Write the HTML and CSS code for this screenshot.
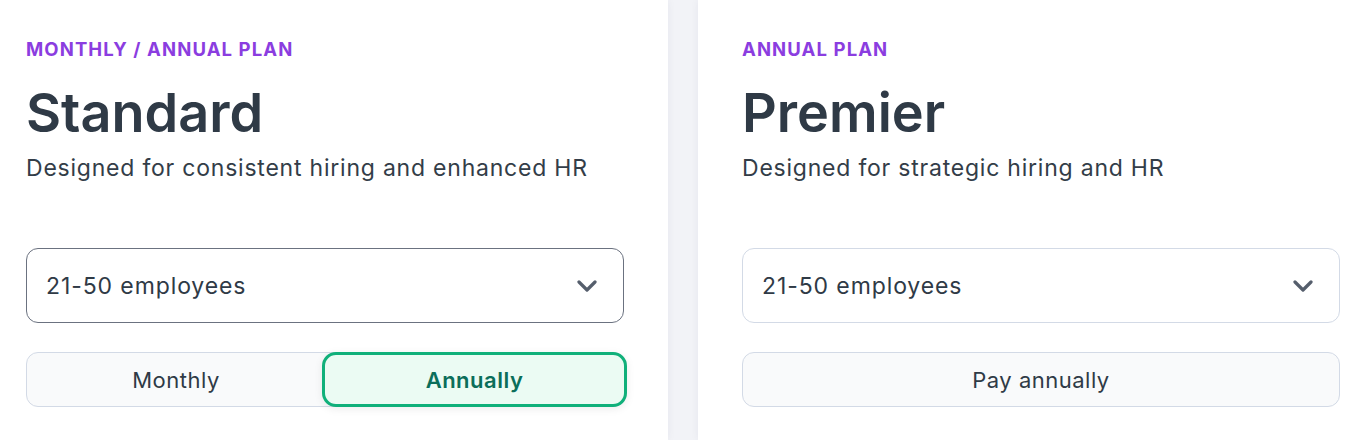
FILE: index.html
```html
<!DOCTYPE html>
<html lang="en">
<head>
    <meta charset="UTF-8">
    <meta name="viewport" content="width=device-width, initial-scale=1.0">
    <title>Plans</title>
    <link rel="stylesheet" href="styles.css">
</head>
<body>
    <div class="plans">
        <!-- Standard -->
        <div class="plan">
            <p class="plan-type">Monthly / Annual plan</p>
            <h2 class="plan-name">Standard</h2>
            <p class="plan-desc">Designed for consistent hiring and enhanced HR</p>

            <div class="select select-focus">
                <span>21-50 employees</span>
                <svg class="chevron" width="20" height="12" viewBox="0 0 20 12"><path d="M2 2l8 8 8-8" fill="none" stroke="currentColor" stroke-width="3.2" stroke-linecap="round" stroke-linejoin="round"/></svg>
            </div>

            <div class="toggle">
                <button class="toggle-btn">Monthly</button>
                <button class="toggle-btn active">Annually</button>
            </div>
        </div>

        <!-- Premier -->
        <div class="plan">
            <p class="plan-type">Annual plan</p>
            <h2 class="plan-name">Premier</h2>
            <p class="plan-desc">Designed for strategic hiring and HR</p>

            <div class="select">
                <span>21-50 employees</span>
                <svg class="chevron" width="20" height="12" viewBox="0 0 20 12"><path d="M2 2l8 8 8-8" fill="none" stroke="currentColor" stroke-width="3.2" stroke-linecap="round" stroke-linejoin="round"/></svg>
            </div>

            <div class="toggle single">
                <button class="toggle-btn">Pay annually</button>
            </div>
        </div>
    </div>
</body>
</html>
```

FILE: styles.css
```css
body {
    margin: 0;
    font-family: Inter, "Noto Sans", Arial, sans-serif;
    background-color: #f2f3f7;
    color: #2f3a46;
    overflow: hidden;
}
.plans {
    display: flex;
    gap: 30px;
    margin-left: -18px;
}
.plan {
    flex: 0 0 686px;
    box-sizing: border-box;
    height: 440px;
    background-color: #fff;
    padding: 38px 44px 0;
    box-shadow: 0 0 8px rgba(30, 40, 80, 0.06);
}
.plan-type {
    margin: 0;
    font-size: 18.5px;
    font-weight: 700;
    letter-spacing: 1.1px;
    text-transform: uppercase;
    color: #8b3de0;
    line-height: 22px;
}
.plan-name {
    margin: 21px 0 0;
    font-size: 54px;
    font-weight: 600;
    line-height: 64px;
    color: #2f3a46;
}
.plan-desc {
    margin: 8px 0 0;
    font-size: 23px;
    letter-spacing: 0.78px;
    line-height: 30px;
    color: #333d48;
}
.select {
    margin-top: 65px;
    height: 75px;
    box-sizing: border-box;
    border: 1px solid #d3dae6;
    border-radius: 12px;
    display: flex;
    align-items: center;
    justify-content: space-between;
    padding: 0 26px 0 19px;
    font-size: 23px;
    letter-spacing: 0.9px;
    color: #2f3a46;
}
.select-focus {
    border-color: #6b7280;
}
.chevron {
    color: #555e6c;
}
.toggle {
    margin-top: 29px;
    height: 55px;
    box-sizing: border-box;
    display: grid;
    grid-template-columns: 1fr 1fr;
    border: 1px solid #d3dae6;
    border-radius: 12px;
    background-color: #f9fafb;
}
.toggle.single {
    grid-template-columns: 1fr;
}
.toggle-btn {
    font-family: inherit;
    font-size: 22px;
    letter-spacing: 0.5px;
    color: #2f3a46;
    background: none;
    border: none;
    cursor: pointer;
}
.toggle-btn.active {
    margin: -1px -4px -1px -3px;
    border: 3px solid #10b07a;
    border-radius: 14px;
    background-color: #ebfbf3;
    color: #0b6e5a;
    font-weight: 600;
    box-shadow: 0 2px 8px rgba(0, 0, 0, 0.08);
}
```
